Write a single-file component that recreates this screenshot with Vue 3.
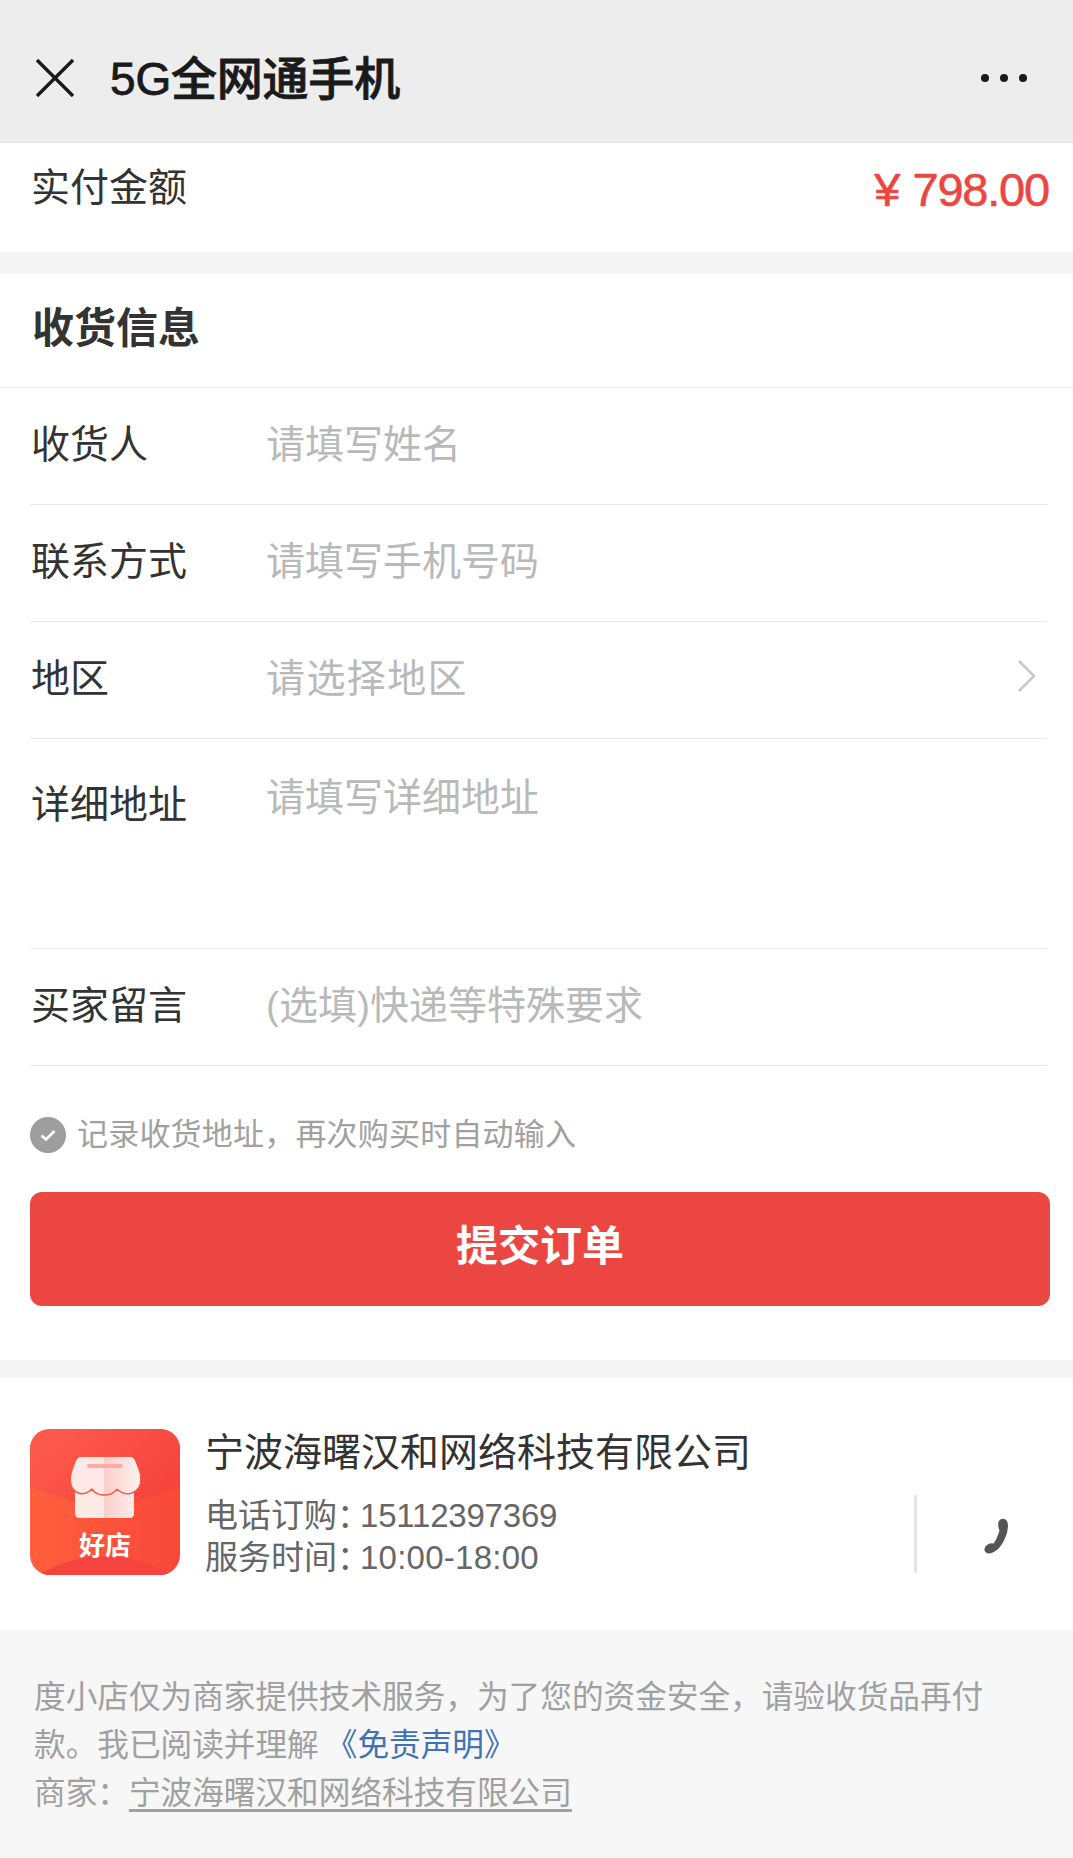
<script setup>
import { reactive } from "vue";

const fields = [
  { key: "name", label: "收货人", placeholder: "请填写姓名" },
  { key: "phone", label: "联系方式", placeholder: "请填写手机号码" },
  { key: "region", label: "地区", placeholder: "请选择地区", arrow: true },
  { key: "address", label: "详细地址", placeholder: "请填写详细地址", multi: true },
  { key: "remark", label: "买家留言", placeholder: "(选填)快递等特殊要求" },
];
const form = reactive({ name: "", phone: "", region: "", address: "", remark: "" });
</script>

<template>
  <div class="page">
    <header class="nav">
      <svg class="close" viewBox="0 0 38 38" width="38" height="38">
        <path d="M1 1 37 37M37 1 1 37" stroke="#1a1a1a" stroke-width="3.4" fill="none" />
      </svg>
      <h1 class="nav-title">5G全网通手机</h1>
      <div class="dots"><i></i><i></i><i></i></div>
    </header>

    <section class="pay">
      <span class="pay-label">实付金额</span>
      <span class="pay-price">¥<span class="pay-num">798.00</span></span>
    </section>

    <section class="receive">
      <h2 class="receive-title">收货信息</h2>
      <div class="fields">
        <label v-for="field in fields" :key="field.key" class="field" :class="{ multi: field.multi }">
          <span class="field-label">{{ field.label }}</span>
          <textarea v-if="field.multi" v-model="form[field.key]" class="field-input area" :placeholder="field.placeholder"></textarea>
          <input v-else v-model="form[field.key]" class="field-input" :class="{ wide: field.arrow }" :placeholder="field.placeholder" />
          <svg v-if="field.arrow" class="arrow" viewBox="0 0 20 34" width="20" height="34">
            <path d="M2 2 17 17 2 32" stroke="#c8c8c8" stroke-width="2.6" fill="none" />
          </svg>
        </label>
      </div>
      <div class="remember">
        <svg viewBox="0 0 36 36" width="36" height="36">
          <circle cx="18" cy="18" r="18" fill="#9e9e9e" />
          <path d="M11.5 18.5 16 22.5 24.5 14" stroke="#fff" stroke-width="2.6" fill="none" />
        </svg>
        <span>记录收货地址，再次购买时自动输入</span>
      </div>
      <button class="submit" type="button">提交订单</button>
    </section>

    <section class="shop">
      <svg class="logo" viewBox="0 0 150 146" width="150" height="146">
        <defs>
          <linearGradient id="logoTop" x1="0" y1="0" x2="1" y2="0.6">
            <stop offset="0" stop-color="#fd5c4e" />
            <stop offset="1" stop-color="#f6443d" />
          </linearGradient>
          <linearGradient id="logoMid" x1="0" y1="0" x2="1" y2="0">
            <stop offset="0" stop-color="#ff5f3c" />
            <stop offset="1" stop-color="#f8483a" />
          </linearGradient>
          <linearGradient id="logoSide" gradientUnits="userSpaceOnUse" x1="74" y1="0" x2="110" y2="0">
            <stop offset="0" stop-color="#fbcfca" />
            <stop offset="1" stop-color="#fff1ef" />
          </linearGradient>
          <clipPath id="logoClip">
            <rect width="150" height="146" rx="20" />
          </clipPath>
          <clipPath id="logoRight">
            <rect x="74" y="20" width="40" height="72" />
          </clipPath>
        </defs>
        <g clip-path="url(#logoClip)">
          <rect width="150" height="146" fill="url(#logoMid)" />
          <path d="M0 58V0H150V58Q110 72 75 82 40 72 0 58Z" fill="url(#logoTop)" />
          <path d="M8 146Q75 108 142 146Z" fill="#f5433f" />
        </g>
        <path d="M45 62H104V84Q104 89 99 89H50Q45 89 45 84Z" fill="#ffe9e7" />
        <path d="M45 62H104V84Q104 89 99 89H50Q45 89 45 84Z" fill="url(#logoSide)" clip-path="url(#logoRight)" />
        <path d="M50 28H100Q103 28 105 32L108 40Q110 45 110 50 110 60 102 63 94 66 87 59 81 66 74 65 67 66 62 59 55 66 48 63 41 60 41 50 41 45 43 40L46 32Q48 28 50 28Z" fill="#ffe9e7" stroke="#fb5440" stroke-width="3" paint-order="stroke" />
        <path d="M50 28H100Q103 28 105 32L108 40Q110 45 110 50 110 60 102 63 94 66 87 59 81 66 74 65 67 66 62 59 55 66 48 63 41 60 41 50 41 45 43 40L46 32Q48 28 50 28Z" fill="url(#logoSide)" clip-path="url(#logoRight)" />
        <rect x="57" y="35" width="36" height="4" rx="2" fill="#ffaaa5" />
        <text x="75" y="126" text-anchor="middle" class="logo-text">好店</text>
      </svg>
      <div class="shop-info">
        <div class="shop-name">宁波海曙汉和网络科技有限公司</div>
        <div class="shop-line"><span class="colon">电话订购：</span><span class="digits">15112397369</span></div>
        <div class="shop-line"><span class="colon">服务时间：</span><span class="time">10:00-18:00</span></div>
      </div>
      <div class="shop-call">
        <svg viewBox="0 0 24 36" width="24" height="36">
          <path d="M14.500 4Q16 .5 20 .8 24 2 24 8 23.500 17 18 26 13 34 6 35.500 2 36 .5 32.500 0 29 3 27 6 24.500 9.500 25.500 12.500 22 15.500 12.500 13.500 8.500 14.500 4Z" fill="#555" />
        </svg>
      </div>
    </section>

    <footer class="notice">
      <p>度小店仅为商家提供技术服务，为了您的资金安全，请验收货品再付款。我已阅读并理解<a class="notice-link">《免责声明》</a></p>
      <p>商家：<a class="notice-shop">宁波海曙汉和网络科技有限公司</a></p>
    </footer>
  </div>
</template>

<style scoped>
.page {
  width: 1073px;
  min-height: 1858px;
  background: #f7f7f7;
  font-family: "Liberation Sans", "Noto Sans CJK SC", sans-serif;
  color: #333;
}
.nav {
  display: flex;
  align-items: center;
  height: 143px;
  padding: 16px 46px 0 36px;
  box-sizing: border-box;
  background: #ededed;
  border-bottom: 1px solid #e4e4e4;
}
.close {
  flex: none;
  margin-top: -2px;
}
.nav-title {
  flex: 1;
  margin: 0 0 0 36px;
  font-size: 46px;
  font-weight: 500;
  line-height: 1;
  letter-spacing: -0.2px;
  color: #1a1a1a;
  -webkit-text-stroke: 0.8px #1a1a1a;
}
.dots {
  display: flex;
  gap: 11px;
  margin-top: -2px;
}
.dots i {
  width: 8px;
  height: 8px;
  border-radius: 50%;
  background: #1a1a1a;
}
.pay {
  display: flex;
  justify-content: space-between;
  height: 109px;
  padding: 23px 24px 0 31px;
  box-sizing: border-box;
  background: #fff;
}
.pay-label {
  font-size: 39px;
  line-height: 44px;
  color: #333;
}
.pay-price {
  font-size: 47px;
  line-height: 48px;
  color: #ec4643;
  -webkit-text-stroke: 0.6px #ec4643;
}
.pay-num {
  margin-left: 12px;
  letter-spacing: -1.2px;
}
.receive {
  padding-bottom: 54px;
  background: #fff;
  border-top: 22px solid #f4f4f4;
}
.receive-title {
  margin: 0;
  height: 113px;
  padding-left: 32px;
  font-size: 42px;
  font-weight: 700;
  line-height: 109px;
  color: #333;
  border-bottom: 1px solid #e8e8e8;
}
.fields {
  margin: 0 26px 0 30px;
}
.field {
  display: flex;
  align-items: center;
  height: 117px;
  padding-bottom: 2px;
  box-sizing: border-box;
  border-bottom: 1px solid #e8e8e8;
}
.field.multi {
  align-items: flex-start;
  height: 210px;
  padding: 37px 0 0;
}
.field-label {
  flex: none;
  width: 236px;
  padding-left: 1px;
  box-sizing: border-box;
  font-size: 39px;
  line-height: 58px;
  color: #333;
}
.field-input {
  flex: 1;
  min-width: 0;
  padding: 0;
  border: 0;
  outline: 0;
  background: transparent;
  font: inherit;
  font-size: 39px;
  line-height: 58px;
  color: #333;
}
.field-input.wide {
  letter-spacing: 1.4px;
}
.field-input::placeholder {
  color: #b9b9b9;
  opacity: 1;
}
.area {
  height: 120px;
  margin-top: -7px;
  resize: none;
}
.arrow {
  flex: none;
  margin: -6px 10px 0 0;
}
.remember {
  display: flex;
  align-items: center;
  gap: 11px;
  margin: 51px 0 0 30px;
  font-size: 31px;
  line-height: 36px;
  letter-spacing: 0.2px;
  color: #a0a0a0;
}
.submit {
  display: block;
  width: 1020px;
  height: 114px;
  margin: 39px 0 0 30px;
  padding: 0 0 14px;
  border: 0;
  border-radius: 12px;
  background: #ec4643;
  font: inherit;
  font-size: 42px;
  font-weight: 700;
  color: #fff;
}
.shop {
  display: flex;
  align-items: flex-start;
  height: 270px;
  padding: 51px 0 0 30px;
  box-sizing: border-box;
  background: #fff;
  border-top: 18px solid #f4f4f4;
}
.logo {
  flex: none;
}
.logo-text {
  font-size: 26px;
  font-weight: 700;
  fill: #fff;
}
.shop-info {
  flex: 1;
  margin-left: 25px;
}
.shop-name {
  margin-bottom: 18px;
  font-size: 39px;
  line-height: 48px;
  color: #333;
}
.shop-line {
  font-size: 33px;
  line-height: 42px;
  color: #666;
}
.colon {
  margin-right: -10px;
}
.digits {
  letter-spacing: -0.2px;
}
.time {
  letter-spacing: 0.25px;
}
.shop-call {
  display: flex;
  align-items: center;
  justify-content: center;
  flex: none;
  width: 159px;
  height: 78px;
  margin-top: 66px;
  padding: 4px 0 0 2px;
  border-left: 3px solid #e5e5e5;
  box-sizing: border-box;
}
.notice {
  padding: 43px 60px 0 34px;
  font-size: 31.65px;
  line-height: 48px;
  color: #a0a0a0;
}
.notice p {
  margin: 0;
}
.notice-link {
  margin-left: 7px;
  color: #3f72b4;
}
.notice-shop {
  text-decoration: underline;
  text-decoration-thickness: 3px;
  text-underline-offset: 5px;
}
</style>

<style>
html,
body {
  margin: 0;
  background: #f7f7f7;
}
</style>
